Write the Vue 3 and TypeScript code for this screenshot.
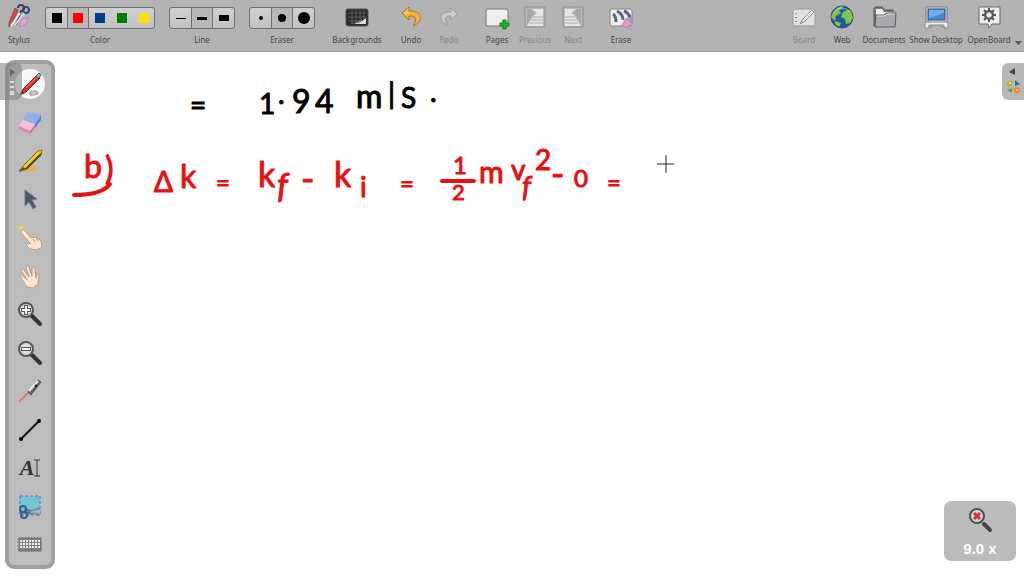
<script setup lang="ts">
import { ref } from 'vue'

interface Ink {
  t: string
  x: number
  y: number
  size: number
}

const colors = ['#000000', '#ff0000', '#004080', '#008000', '#ffe000']
const activeColor = ref(1)
const lines = [1, 3, 6]
const activeLine = ref(1)
const erasers = [2, 4, 6]
const activeEraser = ref(1)

const blackInk: Ink[] = [
  { t: '=', x: 190, y: 63, size: 28 },
  { t: '1', x: 259, y: 62, size: 28 },
  { t: '.', x: 278, y: 52, size: 28 },
  { t: '9', x: 292, y: 61, size: 32 },
  { t: '4', x: 315, y: 61, size: 32 },
  { t: 'm', x: 356, y: 56, size: 32 },
  { t: '|', x: 388, y: 52, size: 28 },
  { t: 'S', x: 401, y: 56, size: 28 },
  { t: '.', x: 430, y: 50, size: 28 },
]

const redInk: Ink[] = [
  { t: 'b', x: 84, y: 126, size: 32 },
  { t: ')', x: 105, y: 128, size: 32 },
  { t: 'Δ', x: 154, y: 140, size: 28 },
  { t: 'k', x: 180, y: 136, size: 32 },
  { t: '=', x: 216, y: 139, size: 24 },
  { t: 'k', x: 258, y: 135, size: 34 },
  { t: 'f', x: 277, y: 146, size: 34 },
  { t: '-', x: 301, y: 140, size: 36 },
  { t: 'k', x: 334, y: 135, size: 34 },
  { t: 'i', x: 360, y: 145, size: 28 },
  { t: '=', x: 400, y: 140, size: 24 },
  { t: '1', x: 453, y: 122, size: 24 },
  { t: '2', x: 452, y: 148, size: 22 },
  { t: 'm', x: 479, y: 131, size: 30 },
  { t: 'v', x: 511, y: 128, size: 28 },
  { t: 'f', x: 522, y: 145, size: 28 },
  { t: '2', x: 535, y: 118, size: 28 },
  { t: '-', x: 551, y: 135, size: 36 },
  { t: '0', x: 574, y: 135, size: 24 },
  { t: '=', x: 607, y: 139, size: 24 },
]
</script>

<template>
  <div class="app">
    <header class="toolbar">
      <button class="tool">
        <svg width="26" height="26" viewBox="0 0 26 26">
          <path d="M12 4a3 3 0 1 1 3 3l-5 14" fill="none" stroke="#34466f" stroke-width="2" />
          <circle cx="20" cy="6" r="3" fill="none" stroke="#34466f" stroke-width="2" />
          <path d="M18 9l-9 12" stroke="#d6dbe3" stroke-width="2" />
          <path d="M9 4l3 2-6 14-3 3v-4z" fill="#d94a3e" stroke="#7d514d" />
          <path d="M5 22L14 9" stroke="#f3f3f3" stroke-width="2" />
          <path d="M16 15l7-2-3 7-7 3z" fill="#e6a4ca" stroke="#b58ab6" />
          <path d="M18 14l5-1-2 4z" fill="#9baee1" />
        </svg>
        <span>Stylus</span>
      </button>

      <div class="choice">
        <div class="segments" role="group" aria-label="Color">
          <button v-for="(c, i) in colors" :key="c" :class="{ on: activeColor === i }" :aria-label="c" @click="activeColor = i">
            <svg width="10" height="10"><rect width="10" height="10" :fill="c" /></svg>
          </button>
        </div>
        <span>Color</span>
      </div>
      <div class="choice">
        <div class="segments" role="group" aria-label="Line">
          <button v-for="(h, i) in lines" :key="h" :class="{ on: activeLine === i }" :aria-label="`Line ${h}`" @click="activeLine = i">
            <svg width="10" :height="h"><rect width="10" :height="h" /></svg>
          </button>
        </div>
        <span>Line</span>
      </div>
      <div class="choice">
        <div class="segments" role="group" aria-label="Eraser">
          <button v-for="(r, i) in erasers" :key="r" :class="{ on: activeEraser === i }" :aria-label="`Eraser ${r}`" @click="activeEraser = i">
            <svg width="12" height="12"><circle cx="6" cy="6" :r="r" /></svg>
          </button>
        </div>
        <span>Eraser</span>
      </div>

      <div class="group">
        <button class="tool wide">
          <svg width="26" height="26" viewBox="0 0 26 26">
            <rect x="2" y="5" width="22" height="17" rx="2" fill="#292929" stroke="#555" />
            <path d="M4 9h18M4 13h18M4 17h18M8 6v14M12 6v14M16 6v14M20 6v14" stroke="#5c5c5c" />
            <path d="M5 20q11 0 17-6v6z" fill="#ddd" />
            <path d="M11 19q6-1 7-4" fill="none" stroke="#777" />
          </svg>
          <span>Backgrounds</span>
        </button>
      </div>
      <div class="group">
        <button class="tool">
          <svg width="26" height="26" viewBox="0 0 26 26">
            <path d="M11 3L4 9l7 7v-4c6-1 9 3 4 10 11-4 10-16-4-15z" fill="#f6b13b" stroke="#a77622" stroke-linejoin="round" />
            <path d="M10 5L6 9h6" fill="none" stroke="#ffd37d" />
          </svg>
          <span>Undo</span>
        </button>
        <button class="tool" disabled>
          <svg width="26" height="26" viewBox="0 0 26 26">
            <path d="M15 4l6 6-6 6v-4c-5-1-8 3-4 9-9-4-8-14 4-13z" fill="#d2d2d2" stroke="#999" stroke-linejoin="round" />
          </svg>
          <span>Redo</span>
        </button>
      </div>
      <div class="group">
        <button class="tool">
          <svg width="26" height="26" viewBox="0 0 26 26">
            <rect x="2" y="5" width="22" height="17" rx="2" fill="#eee" stroke="#777" />
            <path d="M19 16h3v3h3v3h-3v3h-3v-3h-3v-3h3z" fill="#12bf18" stroke="#087c10" />
          </svg>
          <span>Pages</span>
        </button>
        <button class="tool" disabled>
          <svg width="26" height="26" viewBox="0 0 26 26">
            <rect x="3" y="3" width="20" height="20" rx="1" fill="#bcbcbc" stroke="#858585" />
            <path d="M10 5h11v17H5l6-10 4-3z" fill="#efefef" />
            <path d="M11 13h10M9 16h12M8 19h13" stroke="#aaa" />
            <path d="M5 5h4l4 4-3 4-5 8z" fill="#a7a7a7" />
          </svg>
          <span>Previous</span>
        </button>
        <button class="tool" disabled>
          <svg width="26" height="26" viewBox="0 0 26 26">
            <rect x="3" y="3" width="20" height="20" rx="1" fill="#bcbcbc" stroke="#858585" />
            <path d="M16 5H5v17h16l-6-10-4-3z" fill="#efefef" />
            <path d="M5 13h10M5 16h12M5 19h13" stroke="#aaa" />
            <path d="M21 5h-4l-4 4 3 4 5 8z" fill="#a7a7a7" />
          </svg>
          <span>Next</span>
        </button>
      </div>
      <div class="group">
        <button class="tool">
          <svg width="26" height="26" viewBox="0 0 26 26">
            <rect x="2" y="5" width="22" height="17" rx="2" fill="#ededed" stroke="#858585" />
            <path d="M5 10q3 2 3 8M9 7q6 3 6 9M16 7q5 2 6 7" fill="none" stroke="#576785" stroke-width="3" />
            <path d="M18 15l5-2 1 5-5 6-5-3z" fill="#f39abd" stroke="#b27c9c" />
            <path d="M18 15l5-2 1 4-2 2z" fill="#8aa6de" />
          </svg>
          <span>Erase</span>
        </button>
      </div>

      <div class="modes">
        <button class="tool" disabled>
          <svg width="26" height="26" viewBox="0 0 26 26">
            <rect x="2" y="5" width="22" height="17" rx="2" fill="#e8e8e8" stroke="#999" />
            <path d="M5 9v1M5 13v1M5 17v1" stroke="#888" stroke-width="2" />
            <path d="M9 20l3-5L21 6l2 2-9 9z" fill="#f5f5f5" stroke="#858585" />
          </svg>
          <span>Board</span>
        </button>
        <button class="tool">
          <svg width="26" height="26" viewBox="0 0 26 26">
            <circle cx="13" cy="13" r="11" fill="#24589d" stroke="#344d67" />
            <path d="M4 8q5-6 10-6l-1 3-3 1 2 3-5 3-1 5-4-4zM16 4l6 3 2 7-3 5-4 1-1-5-4-2 2-5 5-2zM6 17l6 2-2 4-4-3z" fill="#7fc44c" />
            <path d="M5 8q7-8 16 0" fill="none" stroke="#c7e5ef" opacity=".6" />
          </svg>
          <span>Web</span>
        </button>
        <button class="tool documents">
          <svg width="26" height="26" viewBox="0 0 26 26">
            <path d="M3 22V5l1-2h7l2 3h9v16z" fill="#777" stroke="#555" />
            <path d="M5 5h6l2 3h9v4H5z" fill="#eee" />
            <path d="M4 23l1-12h8l2-2h10l-1 14z" fill="#a9aaae" stroke="#5a5a5a" />
            <path d="M6 12h8l2-2h8" fill="none" stroke="#ddd" />
          </svg>
          <span>Documents</span>
        </button>
        <button class="tool desktop">
          <svg width="26" height="26" viewBox="0 0 26 26">
            <path d="M3 3h21v15h-3v5h-3v-3H9v3H6v-5H3z" fill="#e5e5e5" stroke="#777" />
            <rect x="5" y="5" width="17" height="11" fill="#4689d4" stroke="#315276" />
            <path d="M6 6h15v3L6 14z" fill="#7aacf0" />
            <path d="M2 18h23v6h-4v-3H6v3H2z" fill="#eee" stroke="#888" />
          </svg>
          <span>Show Desktop</span>
        </button>
        <button class="tool openboard">
          <svg width="26" height="26" viewBox="0 0 26 26">
            <path d="M3 3h21v17h-8l-3 4-1-4H3z" fill="#eee" stroke="#666" />
            <circle cx="13" cy="11" r="4" fill="#c5c5c5" stroke="#555" stroke-width="2" />
            <path d="M13 4v4M13 14v4M6 11h4M16 11h4M8 6l3 3M15 13l3 3M18 6l-3 3M11 13l-3 3" stroke="#555" stroke-width="2" />
            <circle cx="13" cy="11" r="2" fill="#eee" />
          </svg>
          <span>OpenBoard</span>
        </button>
        <button class="more" aria-label="More">
          <svg width="7" height="5"><path d="M0 0h7L3.5 4z" fill="#555" /></svg>
        </button>
      </div>
    </header>

    <main class="board">
      <svg class="canvas" width="100%" height="100%">
        <g class="ink black">
          <text v-for="(m, i) in blackInk" :key="i" :x="m.x" :y="m.y" :font-size="m.size">{{ m.t }}</text>
        </g>
        <g class="ink red">
          <text v-for="(m, i) in redInk" :key="i" :class="{ slant: m.t === 'f' }" :x="m.x" :y="m.y" :font-size="m.size">{{ m.t }}</text>
          <path d="M74 143q28 0 36-11" />
          <path d="M442 129h32" />
        </g>
        <path class="cursor" d="M657 112h17M666 103v18" />
      </svg>

      <nav class="palette" aria-label="Drawing tools">
        <button class="selected" aria-label="Pen">
          <svg width="30" height="30" viewBox="0 0 30 30">
            <path d="M14 25q5-4 8-2t-7 3" fill="none" stroke="#aaa" stroke-width="2" />
            <path d="M5 26l3-6L22 6l3 3-14 14z" fill="#d92f2c" stroke="#742d2d" />
            <path d="M21 7l3-3 2 2-3 4z" fill="#aaa" stroke="#555" />
            <path d="M5 26l2-4 2 2z" fill="#333" />
            <path d="M11 19L21 9" stroke="#ff8177" />
          </svg>
        </button>
        <button aria-label="Eraser">
          <svg width="30" height="30" viewBox="0 0 30 30">
            <path d="M13 5l13 3-6 9-12-4z" fill="#8db1ea" />
            <path d="M8 13l12 4-5 7-11-5z" fill="#fac1df" />
            <path d="M4 19l11 5v3L4 22z" fill="#df86b6" />
            <path d="M20 17v4l-5 6v-3z" fill="#c878ac" />
            <path d="M26 8v5l-6 8v-4z" fill="#5983ca" />
          </svg>
        </button>
        <button aria-label="Marker">
          <svg width="30" height="30" viewBox="0 0 30 30">
            <path d="M5 25q9-7 17-3 0 5-17 3z" fill="#e4b13b" />
            <path d="M4 25l4-5L23 5l4-1-1 5-15 14z" fill="#f1ce20" stroke="#746b20" />
            <path d="M11 23L26 8" stroke="#464225" stroke-width="2" />
            <path d="M4 26l4-5 3 2z" fill="#5a4f1c" />
          </svg>
        </button>
        <button aria-label="Select">
          <svg width="30" height="30" viewBox="0 0 30 30">
            <path d="M10 6v16l4-4 4 7 3-2-4-7 5-1z" fill="#4d5668" stroke="#747b87" />
          </svg>
        </button>
        <button aria-label="Interact">
          <svg width="30" height="30" viewBox="0 0 30 30">
            <path d="M6 1v8M1 5h9M2 2l7 7M9 2l-7 7" stroke="#dedc69" />
            <path d="M6 8q1-3 4 0l6 7 5-1 5 4 1 6-5 3-7-1-4-4 2-2 3 1L6 10z" fill="#ffe4cf" stroke="#b89b83" />
            <path d="M18 16l2 3M21 15l2 3" stroke="#b89b83" />
          </svg>
        </button>
        <button aria-label="Scroll">
          <svg width="30" height="30" viewBox="0 0 30 30">
            <path d="M6 17q-2-3 1-3l5 5L6 9q1-3 3 0l5 7-3-10q2-3 3 0l3 9 0-8q2-2 3 1l1 9 1-4q3-1 2 2l-1 8-5 4-6-1z" fill="#ffe4cf" stroke="#b89b83" />
          </svg>
        </button>
        <button aria-label="Zoom in">
          <svg width="30" height="30" viewBox="0 0 30 30">
            <path d="M17 17l8 8" stroke="#333" stroke-width="4" stroke-linecap="round" />
            <circle cx="11" cy="11" r="7" fill="#ddd" stroke="#575757" stroke-width="2" />
            <path d="M11 6v10M6 11h10" stroke="#555" stroke-width="4" />
            <path d="M11 7v8M7 11h8" stroke="#fff" stroke-width="2" />
          </svg>
        </button>
        <button aria-label="Zoom out">
          <svg width="30" height="30" viewBox="0 0 30 30">
            <path d="M17 17l8 8" stroke="#333" stroke-width="4" stroke-linecap="round" />
            <circle cx="11" cy="11" r="7" fill="#ddd" stroke="#575757" stroke-width="2" />
            <path d="M6 11h10" stroke="#555" stroke-width="4" />
            <path d="M7 11h8" stroke="#fff" stroke-width="2" />
          </svg>
        </button>
        <button aria-label="Laser pointer">
          <svg width="30" height="30" viewBox="0 0 30 30">
            <path d="M4 26L15 15" stroke="#e77370" stroke-width="2" />
            <path d="M13 16L23 4l3 2-10 13z" fill="#666" stroke="#505050" />
            <path d="M14 15l9-10" stroke="#eee" stroke-width="2" />
            <path d="M20 9l2 2" stroke="#222" stroke-width="2" />
          </svg>
        </button>
        <button aria-label="Line">
          <svg width="30" height="30" viewBox="0 0 30 30">
            <path d="M6 24L24 6" stroke="#111" stroke-width="2" />
            <circle cx="6" cy="24" r="2" /><circle cx="24" cy="6" r="2" />
          </svg>
        </button>
        <button class="letter" aria-label="Text">
          <i>A</i>
          <svg width="6" height="18" viewBox="0 0 6 18"><path d="M0 1h6M3 1v16M0 17h6" fill="none" stroke="#333" /></svg>
        </button>
        <button aria-label="Capture">
          <svg width="30" height="30" viewBox="0 0 30 30">
            <rect x="5" y="5" width="20" height="19" fill="#77c5d1" stroke="#3b79d0" stroke-dasharray="3 2" />
            <path d="M11 19l14 4M11 23l14-5" stroke="#63808f" stroke-width="3" />
            <path d="M14 21l11-3v5z" fill="#9fb8c0" />
            <circle cx="8" cy="18" r="3" fill="none" stroke="#315d92" stroke-width="2" />
            <circle cx="9" cy="24" r="3" fill="none" stroke="#315d92" stroke-width="2" />
          </svg>
        </button>
        <button aria-label="Keyboard">
          <svg width="30" height="30" viewBox="0 0 30 30">
            <rect x="4" y="8" width="22" height="13" fill="#808080" stroke="#6d6d6d" />
            <path d="M5 11h20M5 14h20M5 17h20" stroke="#eee" stroke-width="2" stroke-dasharray="2 1" />
          </svg>
        </button>
      </nav>

      <button class="tab left" aria-label="Page thumbnails">
        <svg width="22" height="37" viewBox="0 0 22 37">
          <path d="M10 6l5 3-5 4z" fill="#666" />
          <path d="M10 19h4M10 24h4" stroke="#ddd" stroke-width="2" />
          <path d="M10 28h4v4h-4z" fill="#ddd" />
        </svg>
      </button>
      <button class="tab right" aria-label="Library">
        <svg width="22" height="37" viewBox="0 0 22 37">
          <path d="M13 5v7L7 9z" fill="#444" />
          <rect x="5" y="18" width="5" height="5" fill="#c6ad26" />
          <rect x="7" y="19" width="2" height="2" fill="#f4e56a" />
          <path d="M13 17l5 4-5 2z" fill="#24759b" />
          <path d="M10 25v5l-5-3z" fill="#7c9b26" />
          <circle cx="15" cy="27" r="3" fill="#f08b29" />
          <circle cx="15" cy="27" r="1" fill="#ffd29b" />
        </svg>
      </button>

      <div class="zoom">
        <svg width="26" height="26" viewBox="0 0 26 26">
          <path d="M17 17l6 6" stroke="#444" stroke-width="4" stroke-linecap="round" />
          <circle cx="10" cy="9" r="7" fill="#d9dddc" stroke="#435255" stroke-width="2" />
          <path d="M7 6l6 6M13 6l-6 6" stroke="#e52b2b" stroke-width="3" />
        </svg>
        <strong>9.0 x</strong>
      </div>
    </main>
  </div>
</template>

<style>
body {
  margin: 0;
}
</style>

<style scoped>
.app {
  display: flex;
  flex-direction: column;
  min-height: 100vh;
  background: #fff;
  font-family: "Noto Sans", "Open Sans", sans-serif;
}
button {
  margin: 0;
  padding: 0;
  border: 0;
  background: none;
  font: inherit;
  color: inherit;
}
svg {
  display: block;
  flex: none;
}
.toolbar {
  display: flex;
  align-items: flex-start;
  box-sizing: border-box;
  height: 52px;
  padding-top: 4px;
  background: #b3b3b3;
  border-bottom: 1px solid #a0a0a0;
  font-size: 8px;
  line-height: 12px;
  color: #444;
  white-space: nowrap;
}
.tool,
.choice {
  display: flex;
  flex-direction: column;
  align-items: center;
  gap: 4px;
}
.tool {
  width: 38px;
}
.tool:disabled {
  color: #858585;
}
.tool:disabled svg {
  opacity: 0.85;
}
.wide {
  width: 50px;
}
.documents {
  width: 46px;
}
.desktop {
  width: 58px;
}
.openboard {
  width: 48px;
}
.choice {
  margin-left: 14px;
}
.tool + .choice {
  margin-left: 7px;
}
.segments {
  display: flex;
  box-sizing: border-box;
  height: 22px;
  margin: 3px 0 1px;
  border: 1px solid #707070;
  border-radius: 3px;
  background: linear-gradient(#d0d0d0, #c2c2c2);
  overflow: hidden;
}
.segments button {
  display: flex;
  align-items: center;
  justify-content: center;
  box-sizing: border-box;
  width: 22px;
}
.segments button:first-child,
.segments button:last-child {
  width: 21px;
}
.segments .on {
  border: solid #707070;
  border-width: 0 1px;
  background: #b8b8b8;
}
.group {
  display: flex;
  margin-left: 10px;
}
.choice + .group {
  margin-left: 17px;
}
.modes {
  display: flex;
  margin-left: auto;
}
.more {
  display: flex;
  align-self: flex-end;
  justify-content: center;
  width: 11px;
}
.board {
  position: relative;
  flex: 1;
}
.canvas {
  position: absolute;
  inset: 0;
}
.ink {
  font-family: "Lato", "Noto Sans", sans-serif;
  stroke-width: 1;
  stroke-linejoin: round;
}
.ink path {
  fill: none;
  stroke-width: 4;
  stroke-linecap: round;
}
.slant {
  font-style: italic;
}
.black {
  fill: #000;
  stroke: #000;
}
.red {
  fill: #e81010;
  stroke: #e81010;
}
.cursor {
  stroke: #222;
  stroke-width: 1;
}
.palette {
  position: absolute;
  top: 8px;
  bottom: 7px;
  left: 5px;
  display: flex;
  flex-direction: column;
  justify-content: space-between;
  align-items: center;
  box-sizing: border-box;
  width: 50px;
  padding: 5px 0;
  border: 4px solid #9f9f9f;
  border-radius: 9px;
  background: #bdbdbd;
}
.palette button {
  display: flex;
  align-items: center;
  justify-content: center;
  width: 30px;
  height: 30px;
}
.palette .selected {
  border-radius: 50%;
  background: #f8f8f8;
}
.letter {
  font: bold 22px/30px "Liberation Serif", serif;
  color: #333;
}
.tab {
  position: absolute;
  top: 11px;
  width: 22px;
}
.left {
  left: 0;
  border-radius: 0 6px 6px 0;
  background: rgba(130, 130, 130, 0.55);
}
.right {
  right: 0;
  border-radius: 6px 0 0 6px;
  background: #b8b8b8;
}
.zoom {
  position: absolute;
  right: 8px;
  bottom: 15px;
  display: flex;
  flex-direction: column;
  align-items: center;
  box-sizing: border-box;
  width: 72px;
  height: 60px;
  padding-top: 6px;
  gap: 7px;
  border-radius: 7px;
  background: #bcbcbc;
  color: #fff;
  font: bold 15px/18px "Liberation Sans", sans-serif;
}
</style>
